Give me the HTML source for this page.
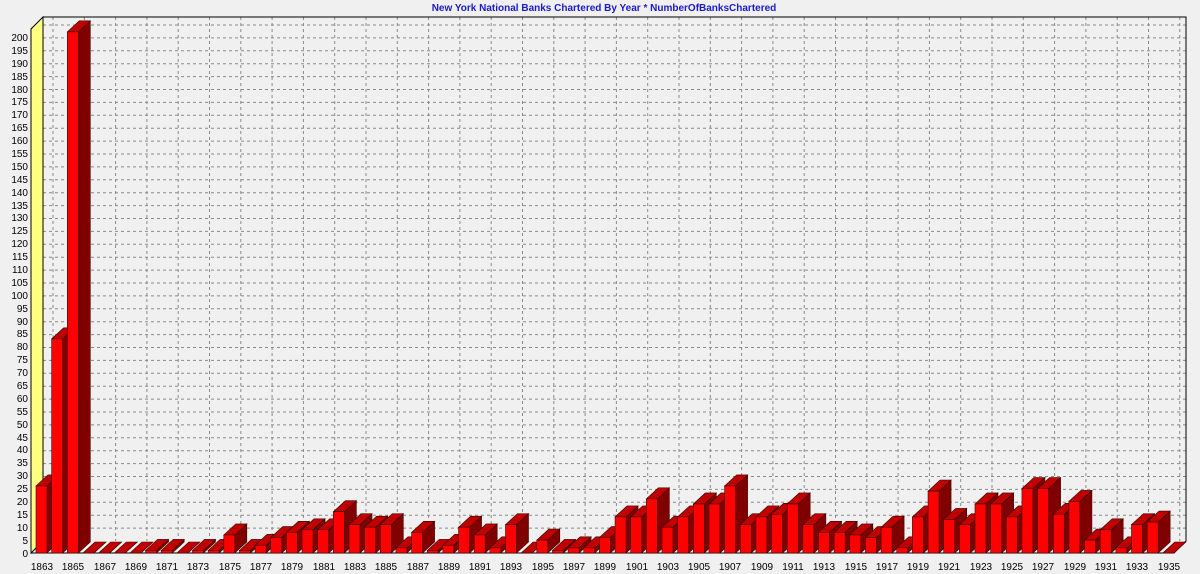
<!DOCTYPE html>
<html><head><meta charset="utf-8"><style>
body{margin:0;background:#f0f0f0;width:1200px;height:574px;overflow:hidden;font-family:"Liberation Sans",sans-serif}
svg{display:block}
.yl{font-size:10px;text-anchor:end;fill:#000}
.xl{font-size:10px;text-anchor:middle;fill:#000}
</style></head><body>
<svg id="s" width="1200" height="574" xmlns="http://www.w3.org/2000/svg">
<text x="604" y="11" font-size="10" font-weight="bold" fill="#1a1acc" text-anchor="middle" font-family="Liberation Sans, sans-serif">New York National Banks Chartered By Year * NumberOfBanksChartered</text>
<rect x="43" y="17" width="1143" height="524" fill="#f0f0f0"/>
<g id="grid" stroke="#8a8a8a" stroke-dasharray="3,3" stroke-width="1"></g>
<polygon points="31,29 43,17 43,541 31,553" fill="#ffff80" stroke="#000" stroke-width="1"/>
<polyline points="43,17 1186,17 1186,541 1174,553 31,553" fill="none" stroke="#000" stroke-width="1"/>
<g id="bars"></g>
<g class="yl">
<text x="28" y="557">0</text><text x="28" y="544">5</text><text x="28" y="531">10</text><text x="28" y="518">15</text><text x="28" y="505">20</text><text x="28" y="492">25</text><text x="28" y="479">30</text><text x="28" y="466">35</text><text x="28" y="453">40</text><text x="28" y="441">45</text><text x="28" y="428">50</text><text x="28" y="415">55</text><text x="28" y="402">60</text><text x="28" y="389">65</text><text x="28" y="376">70</text><text x="28" y="363">75</text><text x="28" y="350">80</text><text x="28" y="337">85</text><text x="28" y="325">90</text><text x="28" y="312">95</text><text x="28" y="299">100</text><text x="28" y="286">105</text><text x="28" y="273">110</text><text x="28" y="260">115</text><text x="28" y="247">120</text><text x="28" y="234">125</text><text x="28" y="221">130</text><text x="28" y="209">135</text><text x="28" y="196">140</text><text x="28" y="183">145</text><text x="28" y="170">150</text><text x="28" y="157">155</text><text x="28" y="144">160</text><text x="28" y="131">165</text><text x="28" y="118">170</text><text x="28" y="105">175</text><text x="28" y="93">180</text><text x="28" y="80">185</text><text x="28" y="67">190</text><text x="28" y="54">195</text><text x="28" y="41">200</text>
</g>
<g class="xl">
<text x="42" y="570">1863</text><text x="73" y="570">1865</text><text x="105" y="570">1867</text><text x="136" y="570">1869</text><text x="167" y="570">1871</text><text x="198" y="570">1873</text><text x="230" y="570">1875</text><text x="261" y="570">1877</text><text x="292" y="570">1879</text><text x="324" y="570">1881</text><text x="355" y="570">1883</text><text x="386" y="570">1885</text><text x="418" y="570">1887</text><text x="449" y="570">1889</text><text x="480" y="570">1891</text><text x="511" y="570">1893</text><text x="543" y="570">1895</text><text x="574" y="570">1897</text><text x="605" y="570">1899</text><text x="637" y="570">1901</text><text x="668" y="570">1903</text><text x="699" y="570">1905</text><text x="730" y="570">1907</text><text x="762" y="570">1909</text><text x="793" y="570">1911</text><text x="824" y="570">1913</text><text x="856" y="570">1915</text><text x="887" y="570">1917</text><text x="918" y="570">1919</text><text x="949" y="570">1921</text><text x="981" y="570">1923</text><text x="1012" y="570">1925</text><text x="1043" y="570">1927</text><text x="1075" y="570">1929</text><text x="1106" y="570">1931</text><text x="1137" y="570">1933</text><text x="1169" y="570">1935</text>
</g>
</svg>
<script>
var NS="http://www.w3.org/2000/svg",K=2.58;
function el(n,a,p){var e=document.createElementNS(NS,n);for(var k in a)e.setAttribute(k,a[k]);p.appendChild(e);return e;}
var g=document.getElementById('grid');
for(var v=5;v<=200;v+=5){var y=541-v*K;el('line',{x1:43,y1:y,x2:1186,y2:y},g);}
for(var x=53;x<1186;x+=31.3){el('line',{x1:x,y1:17,x2:x,y2:541},g);}
var d=[26,83,202,0,0,0,0,1,1,0,1,1,7,1,3,6,8,9,9,16,11,10,11,2,8,1,3,10,7,2,11,0,5,1,2,2,6,14,14,21,10,14,19,19,26,11,14,15,19,11,8,8,7,6,10,2,14,24,13,11,19,19,14,25,25,15,20,5,9,2,11,12,0];
var b=document.getElementById('bars');
d.forEach(function(v,i){
 var x=36+15.65*i,w=11,dx=12,dy=11,yb=553,yt=553-v*K;
 el('polygon',{points:[x+w,yt,x+w+dx,yt-dy,x+w+dx,yb-dy,x+w,yb].join(' '),fill:'#800000',stroke:'#3a0000','stroke-width':0.6},b);
 el('polygon',{points:[x,yt,x+dx,yt-dy,x+w+dx,yt-dy,x+w,yt].join(' '),fill:'#c00000',stroke:'#3a0000','stroke-width':0.6},b);
 if(v>0)el('rect',{x:x,y:yt,width:w,height:yb-yt,fill:'#ff0000',stroke:'#3a0000','stroke-width':0.6},b);
});
</script>
</body></html>
